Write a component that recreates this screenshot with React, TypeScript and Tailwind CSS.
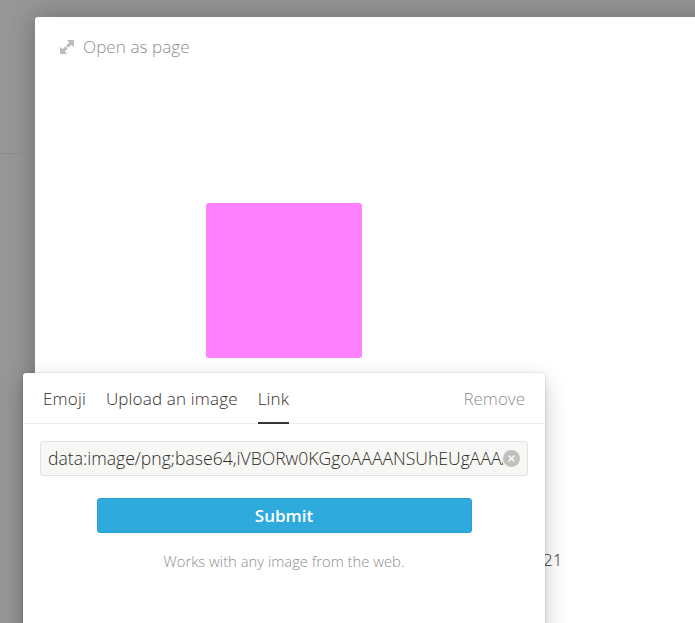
const font = { fontFamily: '"Open Sans", "Noto Sans", sans-serif' }

function ExpandIcon() {
  return (
    <svg width="14" height="14" viewBox="0 0 14 14" className="fill-[#bdbcba]">
      <path d="M6.8 0H14V7.2L11.5 4.7L8.4 7.8L6.2 5.6L9.3 2.5Z" />
      <path d="M0 6.8V14H7.2L4.7 11.5L7.8 8.4L5.6 6.2L2.5 9.3Z" />
    </svg>
  )
}

function ImagePicker() {
  return (
    <div className="absolute left-[23px] top-[373px] w-[522px] h-[300px] bg-white rounded-t-[3px] shadow-[0_0_0_1px_rgba(15,15,15,0.05),0_3px_6px_rgba(15,15,15,0.1),0_9px_24px_rgba(15,15,15,0.2)]">
      <div className="flex h-[51px] items-stretch justify-between border-b border-[#ececeb] px-5">
        <div className="flex gap-5 text-[#2f2d28] text-[17px] font-light tracking-[0.17px]">
          <span className="flex items-center pt-[2px]">Emoji</span>
          <span className="flex items-center pt-[2px]">Upload an image</span>
          <span className="flex items-center pt-[2px] border-b-2 border-[#37352f] -mb-px">Link</span>
        </div>
        <span className="flex items-center pt-[2px] text-[#8f8e8b] text-[17px] font-light">Remove</span>
      </div>
      <div className="flex flex-col items-center">
        <div className="mt-[17px] flex h-[35px] w-[488px] items-center rounded-[3px] border border-[#e1e1df] bg-[#f7f7f5] pl-[7px] pr-[7px]">
          <span className="flex-1 overflow-hidden whitespace-nowrap text-[17.6px] font-light text-[#2f2d28]">
            data:image/png;base64,iVBORw0KGgoAAAANSUhEUgAAA/
          </span>
          <svg width="17" height="17" viewBox="0 0 17 17" className="shrink-0">
            <circle cx="8.5" cy="8.5" r="8.5" fill="#c1c0bc" />
            <path d="M5.5 5.5L11.5 11.5M11.5 5.5L5.5 11.5" stroke="#f7f7f5" strokeWidth="1.6" />
          </svg>
        </div>
        <button className="mt-[22px] h-[35px] w-[375px] rounded-[3px] border border-[#2a9fd3] bg-[#2eaadc] pt-[1px] text-[17px] font-semibold text-white">
          Submit
        </button>
        <p className="mt-[17px] text-[14.8px] font-light text-[#8f8e8b]">Works with any image from the web.</p>
      </div>
    </div>
  )
}

export default function App() {
  return (
    <div style={font} className="relative h-[623px] w-[695px] overflow-hidden bg-[#969696] pt-[17px]">
      <div className="absolute left-0 top-[153px] h-px w-[35px] bg-[#8a8a8a]" />
      <div className="ml-[35px] h-[700px] w-[760px] rounded-t-[3px] bg-white shadow-[0_0_24px_rgba(15,15,15,0.3)]">
        <div className="flex items-center gap-[9px] pl-[25px] pt-[17px] text-[17.2px] font-light text-[#8f8e8b]">
          <ExpandIcon />
          <span>Open as page</span>
        </div>
        <div className="ml-[171px] mt-[143px] h-[155px] w-[156px] rounded-[3px] bg-[#ff80ff]" />
        <p className="ml-[508px] mt-[189px] text-[17px] font-light text-[#2f2d28]">21</p>
      </div>
      <ImagePicker />
    </div>
  )
}
